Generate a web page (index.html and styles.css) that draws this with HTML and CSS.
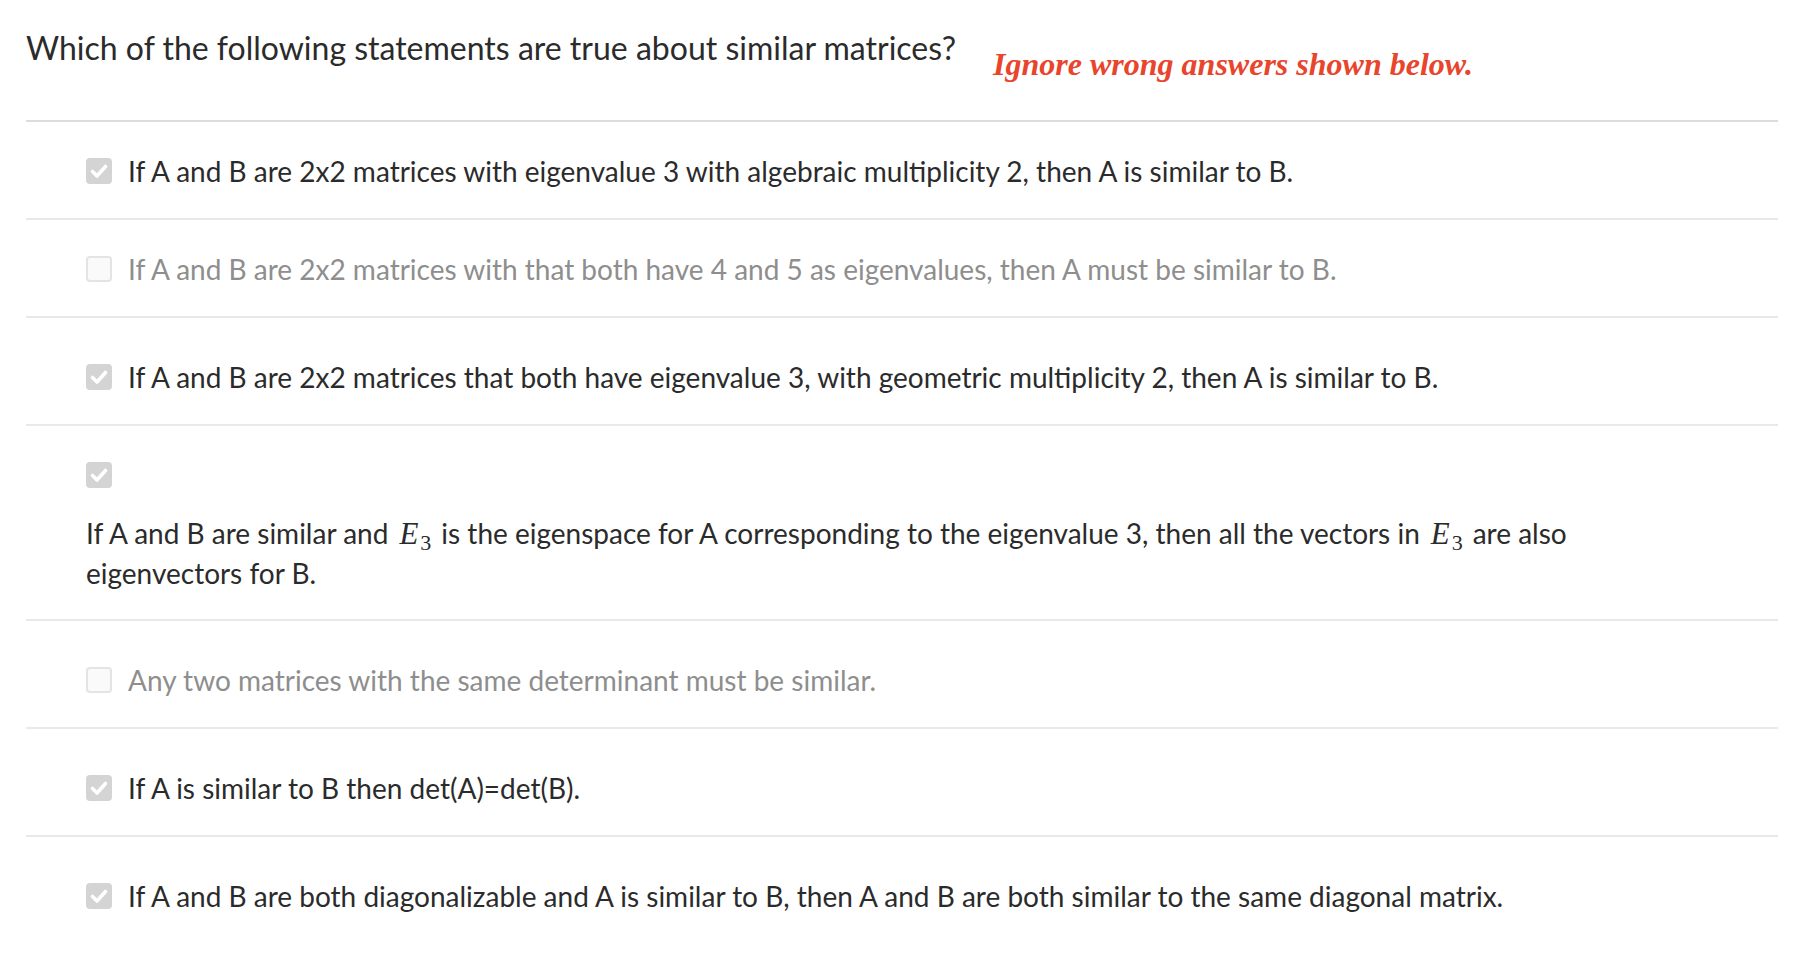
FILE: index.html
```html
<!DOCTYPE html>
<html lang="en">
<head>
<meta charset="utf-8">
<title>Similar matrices</title>
<link rel="stylesheet" href="styles.css">
</head>
<body>
<div class="quiz">
  <div class="header">
    <h2 class="qtext">Which of the following statements are true about similar matrices?</h2>
    <span class="note">Ignore wrong answers shown below.</span>
  </div>
  <ul class="answers">
    <li class="answer a-short">
      <span class="box checked"><svg viewBox="0 0 26 26"><path d="M6.5 13.5 L11 18 L19.5 8.5"/></svg></span>
      <span class="label">If A and B are 2x2 matrices with eigenvalue 3 with algebraic multiplicity 2, then A is similar to B.</span>
    </li>
    <li class="answer a-short off">
      <span class="box"></span>
      <span class="label">If A and B are 2x2 matrices with that both have 4 and 5 as eigenvalues, then A must be similar to B.</span>
    </li>
    <li class="answer">
      <span class="box checked"><svg viewBox="0 0 26 26"><path d="M6.5 13.5 L11 18 L19.5 8.5"/></svg></span>
      <span class="label">If A and B are 2x2 matrices that both have eigenvalue 3, with geometric multiplicity 2, then A is similar to B.</span>
    </li>
    <li class="answer a-block">
      <span class="box checked"><svg viewBox="0 0 26 26"><path d="M6.5 13.5 L11 18 L19.5 8.5"/></svg></span>
      <p class="label"><span>If A and B are similar and</span><span class="math"><i>E</i><sub>3</sub></span><span>is the eigenspace for A corresponding to the eigenvalue 3, then all the vectors in</span><span class="math"><i>E</i><sub>3</sub></span><span>are also</span> <span>eigenvectors for B.</span></p>
    </li>
    <li class="answer off">
      <span class="box"></span>
      <span class="label">Any two matrices with the same determinant must be similar.</span>
    </li>
    <li class="answer">
      <span class="box checked"><svg viewBox="0 0 26 26"><path d="M6.5 13.5 L11 18 L19.5 8.5"/></svg></span>
      <span class="label">If A is similar to B then det(A)=det(B).</span>
    </li>
    <li class="answer last">
      <span class="box checked"><svg viewBox="0 0 26 26"><path d="M6.5 13.5 L11 18 L19.5 8.5"/></svg></span>
      <span class="label">If A and B are both diagonalizable and A is similar to B, then A and B are both similar to the same diagonal matrix.</span>
    </li>
  </ul>
</div>
</body>
</html>
```

FILE: styles.css
```css
html, body {
  margin: 0;
  padding: 0;
  background: #ffffff;
}

body {
  font-family: Lato, "Open Sans", sans-serif;
  color: #2d2d2d;
}

.quiz {
  padding: 0 26px 0 26px;
}

.header {
  display: flex;
  align-items: flex-start;
  height: 120px;
  border-bottom: 2px solid #dcdcdc;
}

.qtext {
  margin: 28px 0 0 0;
  font-size: 32px;
  line-height: 40px;
  font-weight: 400;
  color: #2b2b2b;
}

.note {
  margin: 44px 0 0 37px;
  font-family: "Liberation Serif", "Times New Roman", serif;
  font-style: italic;
  font-weight: 700;
  font-size: 32px;
  line-height: 40px;
  color: #e8452c;
}

.answers {
  list-style: none;
  margin: 0;
  padding: 0;
}

.answer {
  display: flex;
  align-items: center;
  gap: 16px;
  padding: 39px 0 27px 60px;
  border-bottom: 2px solid #e9e9e9;
  font-size: 28px;
  line-height: 40px;
  color: #2b2b2b;
}

.answer.a-short {
  padding-top: 29px;
}

.answer.last {
  border-bottom: none;
}

.answer.off {
  color: #8e8e8e;
}

.answer.a-block {
  flex-direction: column;
  align-items: flex-start;
  gap: 0;
  padding-top: 36px;
  padding-bottom: 26px;
}

.answer.a-block .label {
  margin: 25px 0 0 0;
  padding-right: 120px;
}

.box {
  flex: none;
  width: 26px;
  height: 26px;
  box-sizing: border-box;
  border-radius: 4px;
  background: #fafafa;
  border: 2px solid #e4e4e4;
}

.box.checked {
  background: #d4d4d4;
  border: none;
}

.box svg {
  display: block;
  width: 26px;
  height: 26px;
}

.box svg path {
  fill: none;
  stroke: #ffffff;
  stroke-width: 3.6;
  stroke-linecap: round;
  stroke-linejoin: round;
}

.math {
  display: inline-block;
  font-family: "Liberation Serif", "Times New Roman", serif;
  font-size: 31px;
  line-height: 30px;
  margin: 0 10px 0 11px;
}

.math i {
  font-style: italic;
  padding-right: 2px;
}

.math sub {
  font-size: 22px;
  vertical-align: -6px;
  line-height: 0;
}
```
